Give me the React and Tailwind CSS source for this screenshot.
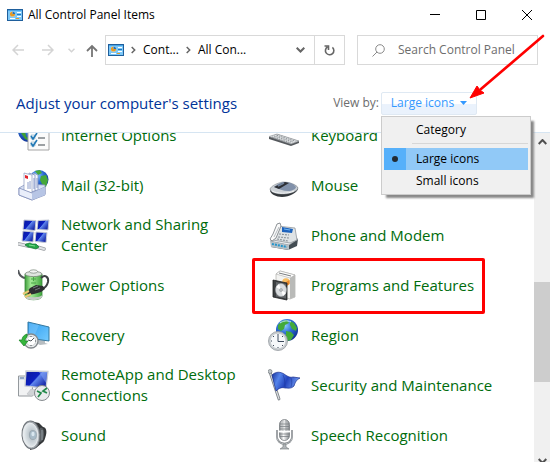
import React, { useState } from 'react';

const PanelIcon = () => (
  <svg width="16" height="12" viewBox="0 0 16 12" aria-hidden="true">
    <rect x="0.5" y="0.5" width="15" height="11" fill="#7cc8f8" stroke="#1f5f9c" />
    <rect x="1" y="1" width="14" height="1" fill="#4aa5e6" />
    <circle cx="5.5" cy="5" r="2.6" fill="#fff" />
    <path d="M5.5 5V2.4A2.6 2.6 0 1 0 8.1 5z" fill="#e59a25" />
    <path d="M5.5 5V2.4A2.6 2.6 0 0 1 8.1 5z" fill="#2273b8" />
    <rect x="10" y="3" width="4" height="1" fill="#fff" />
    <rect x="10" y="5" width="4" height="1" fill="#1f78c0" />
    <rect x="10" y="7" width="4" height="1" fill="#fff" />
    <rect x="3" y="9" width="5" height="1" fill="#fff" />
    <rect x="9" y="9" width="3" height="1" fill="#e59a25" />
  </svg>
);

const Icon = ({ children }) => (
  <svg width="32" height="32" viewBox="0 0 32 32" className="shrink-0" aria-hidden="true">
    {children}
  </svg>
);

const Gradients = () => (
  <svg width="0" height="0" className="absolute" aria-hidden="true">
    <defs>
      <radialGradient id="globe" cx="0.4" cy="0.3" r="0.75">
        <stop offset="0" stopColor="#8fd0ff" />
        <stop offset="0.45" stopColor="#2e6fd6" />
        <stop offset="1" stopColor="#0b2a8c" />
      </radialGradient>
      <linearGradient id="screen" x1="0" y1="0" x2="1" y2="0.7">
        <stop offset="0" stopColor="#0a1a9a" />
        <stop offset="0.5" stopColor="#0c1fc0" />
        <stop offset="0.55" stopColor="#5f86ee" />
        <stop offset="1" stopColor="#0e1c9e" />
      </linearGradient>
      <linearGradient id="battery" x1="0" y1="0" x2="1" y2="0">
        <stop offset="0" stopColor="#3f9e3c" />
        <stop offset="0.35" stopColor="#a5eb98" />
        <stop offset="1" stopColor="#3fa53c" />
      </linearGradient>
      <linearGradient id="metal" x1="0" y1="0" x2="1" y2="0">
        <stop offset="0" stopColor="#8b8f93" />
        <stop offset="0.4" stopColor="#fafafa" />
        <stop offset="1" stopColor="#85898d" />
      </linearGradient>
      <linearGradient id="sky" x1="0" y1="0" x2="1" y2="1">
        <stop offset="0" stopColor="#2e9cf0" />
        <stop offset="1" stopColor="#74cbff" />
      </linearGradient>
      <linearGradient id="flag" x1="0" y1="0" x2="1" y2="0.3">
        <stop offset="0" stopColor="#16309a" />
        <stop offset="0.3" stopColor="#5584ea" />
        <stop offset="0.6" stopColor="#2344bd" />
        <stop offset="1" stopColor="#6d96ee" />
      </linearGradient>
      <radialGradient id="cone" cx="0.6" cy="0.5" r="0.6">
        <stop offset="0" stopColor="#7f8a92" />
        <stop offset="0.4" stopColor="#c3ccd2" />
        <stop offset="1" stopColor="#eef2f4" />
      </radialGradient>
    </defs>
  </svg>
);

const InternetIcon = () => (
  <Icon>
    <circle cx="11" cy="12" r="11" fill="url(#globe)" />
    <path d="M2 8l5-5 6 1-2 5-4 3 1 5 4 5-5-2-4-6zM14 5l6 3 1 5-5-2z" fill="#3f9e35" />
    <path d="M10 12h21v19H10z" fill="#fbfbfb" stroke="#a5a5a5" />
    <path d="M13 16h4v4h-4zM13 23h4v4h-4z" fill="#e4f0f8" stroke="#9bb9cd" strokeWidth="0.7" />
    <path d="M13 17l2 3 4-6M13 24l2 3 4-6" fill="none" stroke="#2178b5" strokeWidth="1.6" />
    <path d="M20 19h7M20 26h7" stroke="#7d8387" strokeWidth="1.3" />
  </Icon>
);

const MailIcon = () => (
  <Icon>
    <circle cx="21" cy="10.5" r="9.5" fill="url(#globe)" />
    <path d="M17 2l5-1 2 3-4 2zM23 7l5-1 2 5-2 7-4-3-2-4z" fill="#45a83a" />
    <path d="M1 19L8 15 27 16 27 25 14 31 1 26z" fill="#d9e2f5" stroke="#8a97bf" strokeWidth="0.8" />
    <path d="M15 4l5 2v15l-5 1z" fill="#f5f8fe" stroke="#7e8ebb" strokeWidth="0.7" />
    <path d="M11 4l6 2v16l-6 1z" fill="#f9fbff" stroke="#7384b8" strokeWidth="0.7" />
    <path d="M6 4l8 2v18l-8-2z" fill="#fff" stroke="#8b98bd" strokeWidth="0.7" />
    <path d="M7 6l3 1v3L7 9z" fill="#e3222c" />
    <path d="M10 13v7M12 12v8M16 9v11M19 9v10" stroke="#7187bd" strokeWidth="0.8" />
    <path d="M1 19l13 5 13-6v8l-13 5-13-5z" fill="#e9eefa" stroke="#7d8bb7" strokeWidth="0.8" />
    <path d="M14 24v7l13-5v-8z" fill="#b7c5e5" />
  </Icon>
);

const NetworkIcon = () => (
  <Icon>
    <path d="M6 1l12 .5-1 10-12-1z" fill="url(#screen)" stroke="#c6cbd6" />
    <path d="M20 1.5l11-.5-1 10-11-.5z" fill="url(#screen)" stroke="#c6cbd6" />
    <path d="M5 12l11 1-1 10-11-1z" fill="url(#screen)" stroke="#c6cbd6" />
    <path d="M18 13l11 .5-1 10-11-1z" fill="url(#screen)" stroke="#c6cbd6" />
    <path d="M1 25l9 2M19 28l7 2" stroke="#9b9fa3" strokeWidth="3.6" strokeLinecap="round" />
    <path d="M1 25l9 2M19 28l7 2" stroke="#dfe2e4" strokeWidth="2" strokeLinecap="round" />
    <path d="M8 25l4-1 2 1h4l3 3-3 2-4-1-4-1-3-2z" fill="#25a548" stroke="#107330" strokeWidth="0.7" />
    <path d="M11 26l6 1" stroke="#7de091" />
  </Icon>
);

const PowerIcon = () => (
  <Icon>
    <path d="M0 1C1 6 3 9 8 9" fill="none" stroke="#54585c" strokeWidth="2" />
    <path d="M7 5v22c0 5 17 5 17 0V5z" fill="url(#battery)" stroke="#37883a" strokeWidth="0.8" />
    <path d="M7 26c1 3 16 3 17 0v2c-1 4-16 4-17 0z" fill="#c6cac7" />
    <ellipse cx="15.5" cy="5" rx="8.5" ry="2.6" fill="#dfe5df" stroke="#79857a" strokeWidth="0.8" />
    <ellipse cx="15.5" cy="2.5" rx="4" ry="1.7" fill="#f2f4f2" stroke="#79857a" strokeWidth="0.7" />
    <path d="M13 10h5M13 14h5M15.5 8v4" stroke="#48a545" strokeWidth="1" />
    <path d="M23 9c4-4 8-1 7 4-1 4-3 6-6 7" fill="none" stroke="#3e4144" strokeWidth="2" />
    <path d="M12 19l6-3 7 1 2 3-4 3-7 2-6 1-1-3z" fill="#2d2f31" />
    <path d="M15 19l5-2M17 21l5-2" stroke="#73777b" />
    <path d="M11 22l-6 3M13 25l-6 3" stroke="#e1b757" strokeWidth="2" />
    <path d="M11 22l-6 3M13 25l-6 3" stroke="#f6e5ac" strokeWidth="0.6" />
  </Icon>
);

const RecoveryIcon = () => (
  <Icon>
    <path d="M20 19l7 2v3l3 1-8 1-6-3z" fill="#b7bdc1" />
    <path d="M10 3l21 5v14l-21-3z" fill="url(#sky)" stroke="#35789f" />
    <path d="M11 4l10 2-6 14-4-1z" fill="#9bd8ff" opacity="0.35" />
    <circle cx="13" cy="22" r="7" fill="#eceeef" stroke="#83898d" strokeWidth="1.3" />
    <circle cx="13" cy="22" r="4.8" fill="#fff" stroke="#b5babd" strokeWidth="0.7" />
    <path d="M13 22l3-3M13 22l-3-1M13 17v1M13 26v1M18 22h-1" stroke="#4f565b" strokeWidth="1" />
    <path d="M9 15c-3 1-5 3-5 6H1l5 6 4-5H7c0-2 1-3 2-4z" fill="#37b63d" stroke="#168221" strokeWidth="0.7" />
  </Icon>
);

const RemoteIcon = () => (
  <Icon>
    <path d="M.5 7h14v20H.5z" fill="#f1f2f3" stroke="#94999d" />
    <path d="M1 8h13v3H1z" fill="#d5dfec" />
    <path d="M2 9h4" stroke="#4e6e9b" />
    <path d="M13 20l8 1v4l-8 2-4-2z" fill="#d0d3d6" stroke="#b4b7ba" strokeWidth="0.5" />
    <path d="M8 2l22 .5-2 17L7 17z" fill="url(#screen)" stroke="#c9ced6" strokeWidth="1.3" />
    <path d="M21 3h8l-1 11z" fill="#7b9df1" opacity="0.6" />
    <circle cx="24" cy="24" r="7.5" fill="#e9ebec" stroke="#858a8e" />
    <path d="M19 22l4 2-3 4M29 19l-4 3 4 2" fill="none" stroke="#23894a" strokeWidth="1.7" />
  </Icon>
);

const SoundIcon = () => (
  <Icon>
    <path d="M12 2l9 2 4 4c3 0 4 4 3 8s-2 7-4 8l-6 5-6 2z" fill="#343739" />
    <path d="M22 9c3-1 4 2 4 6s-1 7-4 8z" fill="#595e62" />
    <path d="M24 11v10" stroke="#97a0a6" />
    <ellipse cx="13" cy="16" rx="9" ry="14" fill="#a5abb0" stroke="#6c7277" transform="rotate(-4 13 16)" />
    <ellipse cx="12.5" cy="16" rx="7.5" ry="12" fill="url(#cone)" stroke="#eef1f3" strokeWidth="0.8" transform="rotate(-4 13 16)" />
    <ellipse cx="15" cy="16" rx="3.5" ry="4.5" fill="#a9bcc9" stroke="#8a969e" strokeWidth="0.5" />
    <ellipse cx="15" cy="15" rx="1.6" ry="2.3" fill="#d9e7ef" />
  </Icon>
);

const KeyboardIcon = () => (
  <Icon>
    <path d="M1 18l8-3 22 7v2l-8 3-22-7z" fill="#55595d" />
    <path d="M1 17.5l8-2.5 22 7-8 3z" fill="#dfe2e4" stroke="#929699" strokeWidth="0.6" />
    <path d="M4 18l19 6M6 17l19 6M8.5 16.2l19 6" stroke="#7f8488" strokeWidth="0.8" strokeDasharray="1.6 0.8" />
  </Icon>
);

const MouseIcon = () => (
  <Icon>
    <path d="M2 21c0-2 6-6 12-7 7-1 15 2 16 5 1 4-9 9-16 9C8 28 2 25 2 21z" fill="#34383c" />
    <path d="M2 20c1-3 7-6 13-7 7 0 14 3 15 6 0 3-8 6-15 6S2 23 2 20z" fill="#cdd2d7" stroke="#888e94" strokeWidth="0.6" />
    <path d="M6 18c3-3 7-5 11-5 6 0 10 3 11 5 0 2-4 4-8 4-5 0-9-2-14-4z" fill="#8191aa" />
    <path d="M6 18l11-5 4 1-10 6z" fill="#2d3035" />
    <path d="M10 17l6-3" stroke="#74869e" strokeWidth="1.5" />
    <path d="M4 22c5 3 16 3 22 0" fill="none" stroke="#f5f6f7" />
  </Icon>
);

const PhoneIcon = () => (
  <Icon>
    <path d="M3 22l5-4 22 2-1 7-9 4-17-3z" fill="#434c53" />
    <path d="M2 22l6-4 22 2-9 6z" fill="#eceff1" stroke="#9ba0a4" strokeWidth="0.6" />
    <path d="M2 22l19 4v5l-18-3z" fill="#b6c0c6" />
    <path d="M4 25l15 3" stroke="#2395cc" strokeWidth="2" strokeDasharray="2 1" />
    <path d="M9 7l18 2 2 12-7 3-17-3z" fill="#dfe3e5" stroke="#858b90" strokeWidth="0.7" />
    <path d="M14 8l11 2-1 4-10-1z" fill="#1d63bd" />
    <path d="M16 10l6 1" stroke="#74b9f3" />
    <path d="M11 15l10 1M10 18l11 1M9 20l11 2" stroke="#8f979d" strokeWidth="1.2" strokeDasharray="2 1" />
    <path d="M9 5l3-1 1 3-5 12-4 3-2-2 3-5z" fill="#fafafa" stroke="#747a7f" strokeWidth="0.8" />
    <path d="M11 8L6 18" stroke="#b4bbc0" />
  </Icon>
);

const ProgramsIcon = () => (
  <Icon>
    <path d="M8 5l4-3 15 4v22l-5 2-14-4z" fill="#f3f3f1" stroke="#b7b7b4" strokeWidth="0.8" />
    <path d="M22 9l5-3v22l-5 2z" fill="#b9bab8" />
    <path d="M8 5l4-3 15 4-5 3z" fill="#fff" stroke="#a9aaa8" strokeWidth="0.6" />
    <path d="M11 4l12 3" stroke="#777b7d" />
    <circle cx="18" cy="13" r="3.8" fill="#f8bd62" />
    <path d="M18 13l3.5-2v4l-2.500 1.500z" fill="#e9882b" />
    <path d="M5 11l14 3v17L5 28z" fill="#3d4042" stroke="#1f2122" strokeWidth="0.8" />
    <path d="M8 13l10 2v14.5L8 27.500z" fill="#63676a" />
    <ellipse cx="13" cy="21" rx="5.5" ry="6.5" fill="#dadddf" stroke="#a3a7aa" strokeWidth="0.5" />
    <path d="M13 21l-5-3 3-3zM13 21l5 3-3 3z" fill="#fff" />
    <circle cx="13" cy="21" r="1.7" fill="#8c9194" />
    <circle cx="13" cy="21" r="0.7" fill="#fff" />
  </Icon>
);

const RegionIcon = () => (
  <Icon>
    <circle cx="19" cy="11" r="11" fill="url(#globe)" />
    <path d="M10 6l4-4 5-1 2 3-4 2-1 4-3 2-3-2zM22 2l4 2 3 5-1 3-4-2-2-4zM18 12l5 1 3 3-3 5-4 1-1-5z" fill="#43aa3a" />
    <path d="M12 4c3-2 7-3 11-1" stroke="#bfebff" strokeWidth="1" fill="none" />
    <circle cx="10" cy="22" r="9.5" fill="#c8cdd1" stroke="#969b9f" strokeWidth="0.8" />
    <circle cx="10" cy="22" r="7.8" fill="#f6f8fa" stroke="#b8bdc1" strokeWidth="0.6" />
    <path d="M10 15v7.5h6M10 28v1M3 22h1M5 17l1 1M15 17l-1 1M5 27l1-1M15 27l-1-1" fill="none" stroke="#3d4b5c" strokeWidth="1" />
  </Icon>
);

const SecurityIcon = () => (
  <Icon>
    <path d="M2 3l9 27" stroke="#777d82" strokeWidth="2.8" strokeLinecap="round" />
    <path d="M2 3l9 27" stroke="#dadde0" strokeWidth="1.2" strokeLinecap="round" />
    <circle cx="2" cy="2.5" r="2" fill="#c1c6ca" stroke="#767c80" strokeWidth="0.7" />
    <path d="M4 6c4-4 9-3 12-1s6 4 9 3l7 1c-4 2-5 5-6 8-3 3-6 2-9 2-3-1-6 0-9 3z" fill="url(#flag)" stroke="#172d8b" strokeWidth="0.7" />
    <path d="M15 6c2 4 2 8 2 12M23 9c1 3 1 6 0 9" stroke="#17318f" strokeWidth="0.8" fill="none" opacity="0.6" />
  </Icon>
);

const SpeechIcon = () => (
  <Icon>
    <path d="M9 11v7c0 9 15 9 15 0v-7" fill="none" stroke="#777c80" strokeWidth="1.8" />
    <path d="M9 11v7c0 9 15 9 15 0v-7" fill="none" stroke="#d5d8da" strokeWidth="0.7" />
    <path d="M15 25h3v3l3 2h-9l3-2z" fill="#b1b5b8" stroke="#73787b" strokeWidth="0.6" />
    <rect x="11.5" y="0.5" width="10" height="21" rx="5" fill="url(#metal)" stroke="#777c80" strokeWidth="0.8" />
    <path d="M12 5h9M12 7.5h9M12 10h9M12 15h9M12 17.5h9" stroke="#73787c" strokeWidth="0.7" />
    <path d="M11 12.5h11" stroke="#fff" strokeWidth="1.8" />
    <path d="M15 1v11M18 1v11" stroke="#8b9094" strokeWidth="0.6" />
  </Icon>
);

const items = [
  { name: 'Internet Options', icon: InternetIcon },
  { name: 'Keyboard', icon: KeyboardIcon },
  { name: 'Mail (32-bit)', icon: MailIcon },
  { name: 'Mouse', icon: MouseIcon },
  { name: 'Network and Sharing Center', icon: NetworkIcon },
  { name: 'Phone and Modem', icon: PhoneIcon },
  { name: 'Power Options', icon: PowerIcon },
  { name: 'Programs and Features', icon: ProgramsIcon, marked: true },
  { name: 'Recovery', icon: RecoveryIcon },
  { name: 'Region', icon: RegionIcon },
  { name: 'RemoteApp and Desktop Connections', icon: RemoteIcon },
  { name: 'Security and Maintenance', icon: SecurityIcon },
  { name: 'Sound', icon: SoundIcon },
  { name: 'Speech Recognition', icon: SpeechIcon },
];

const views = ['Category', 'Large icons', 'Small icons'];

const Crumb = () => (
  <svg width="5" height="8" viewBox="0 0 5 8" fill="none" stroke="#666" strokeWidth="1.5" aria-hidden="true">
    <path d="M.7 1l3 3-3 3" />
  </svg>
);

const TitleBar = () => (
  <header className="flex h-[30px] items-center">
    <div className="flex flex-1 items-center gap-[5px] pl-[7px] text-xs text-black">
      <PanelIcon />
      <h1>All Control Panel Items</h1>
    </div>
    <button aria-label="Minimize" className="flex h-full w-[46px] items-center justify-center">
      <svg width="10" height="10" viewBox="0 0 10 10" stroke="#000"><path d="M0 4.5h10" /></svg>
    </button>
    <button aria-label="Maximize" className="flex h-full w-[46px] items-center justify-center">
      <svg width="10" height="10" viewBox="0 0 10 10" fill="none" stroke="#000"><path d="M.5.5h9v9h-9z" /></svg>
    </button>
    <button aria-label="Close" className="flex h-full w-[46px] items-center justify-center">
      <svg width="10" height="10" viewBox="0 0 10 10" stroke="#000"><path d="M0 0l10 10M10 0L0 10" /></svg>
    </button>
  </header>
);

const AddressBar = () => (
  <nav className="mt-[5px] flex h-[30px] items-center pr-3">
    <div className="flex w-[105px] shrink-0 items-center pl-3">
      <button aria-label="Back" className="mr-[18px]">
        <svg width="12" height="12" viewBox="0 0 12 12" fill="none" stroke="#d4d4d4" strokeWidth="1.5"><path d="M12 6H1M6 1L1 6l5 5" /></svg>
      </button>
      <button aria-label="Forward" className="mr-[14px]">
        <svg width="12" height="12" viewBox="0 0 12 12" fill="none" stroke="#d4d4d4" strokeWidth="1.5"><path d="M0 6h11M6 1l5 5-5 5" /></svg>
      </button>
      <button aria-label="Recent locations" className="mr-[11px]">
        <svg width="7" height="5" viewBox="0 0 7 5" fill="none" stroke="#d4d4d4" strokeWidth="1.5"><path d="M.5.7l3 3 3-3" /></svg>
      </button>
      <button aria-label="Up">
        <svg width="12" height="13" viewBox="0 0 12 13" fill="none" stroke="#757575" strokeWidth="1.8"><path d="M6 13V2M1 7l5-5 5 5" /></svg>
      </button>
    </div>
    <div className="flex h-full flex-1 border border-[#d9d9d9] text-xs text-black">
      <div className="flex flex-1 items-center pl-[2px]">
        <PanelIcon />
        <span className="ml-[7px]"><Crumb /></span>
        <a href="#control" className="ml-[7px]">Cont...</a>
        <span className="ml-[7px]"><Crumb /></span>
        <a href="#items" className="ml-[7px]">All Con...</a>
        <button aria-label="Previous locations" className="mr-[9px] ml-auto">
          <svg width="9" height="6" viewBox="0 0 9 6" fill="none" stroke="#666" strokeWidth="2"><path d="M.7.7l3.8 3.8L8.3.7" /></svg>
        </button>
      </div>
      <button aria-label="Refresh" className="flex w-[30px] items-center justify-center border-l border-[#d9d9d9]">
        <svg width="11" height="12" viewBox="0 0 11 12" fill="none" stroke="#666" strokeWidth="1.6"><path d="M8.4 3.4A4.2 4.2 0 1 1 3.4 3M.5 2h4v4" /></svg>
      </button>
    </div>
    <label className="ml-3 flex h-full w-[181px] shrink-0 items-center gap-[13px] border border-[#d9d9d9] pl-[14px]">
      <svg width="13" height="13" viewBox="0 0 13 13" fill="none" stroke="#8a8a8a" className="shrink-0"><circle cx="8" cy="5" r="4.3" /><path d="M5 8L.5 12.5" /></svg>
      <input aria-label="Search Control Panel" placeholder="Search Control Panel" className="w-full min-w-0 text-xs outline-none placeholder:text-[#6d6d6d]" />
    </label>
  </nav>
);

const ViewMenu = () => {
  const [open, setOpen] = useState(true);
  const [view, setView] = useState('Large icons');

  return (
    <div className="flex items-center gap-[2px]">
      <span className="text-xs text-[#6d6d6d]">View by:</span>
      <div className="relative">
        <button
          onClick={() => setOpen(!open)}
          aria-expanded={open}
          className="flex h-[23px] w-[96px] items-center justify-center gap-[6px] rounded-[2px] border border-[#dfe9f3] bg-linear-to-b from-white from-50% to-[#eaf2fc] to-55% text-xs text-[#3399ff]"
        >
          {view}
          <svg width="7" height="4" viewBox="0 0 7 4" fill="#3399ff" aria-hidden="true"><path d="M0 0h7L3.5 4z" /></svg>
        </button>
        {open && (
          <ul className="absolute top-[24px] left-0 z-10 w-[150px] border border-[#ccc] bg-[#f0f0f0] p-[2px] shadow-[4px_4px_2px_-1px_#888]">
            {views.map((name) => (
              <li key={name} className={name === 'Category' ? 'mb-[3px] pb-[1px]' : ''}>
                <button
                  onClick={() => setView(name)}
                  className={`flex h-[22px] w-full items-center text-left text-xs text-black ${name === view ? 'bg-[#91c9f7]' : ''}`}
                >
                  <span className={`mr-[10px] flex h-full w-[22px] items-center justify-center ${name === view ? 'bg-[#56b0fa]' : ''}`}>
                    {name === view && <span className="size-[6px] rounded-full bg-[#222b33]"></span>}
                  </span>
                  {name}
                </button>
                {name === 'Category' && <hr className="mt-[2px] ml-[28px] border-[#d7d7d7]" />}
              </li>
            ))}
          </ul>
        )}
      </div>
    </div>
  );
};

const ScrollBar = () => (
  <div className="flex w-[16px] shrink-0 flex-col items-center bg-[#f0f0f0]" aria-hidden="true">
    <svg width="9" height="6" viewBox="0 0 9 6" fill="none" stroke="#505050" strokeWidth="2" className="mt-[6px] shrink-0"><path d="M.7 5l3.8-4 3.8 4" /></svg>
    <div className="mt-[137px] h-[100px] w-full shrink-0 bg-[#cdcdcd]"></div>
    <svg width="9" height="6" viewBox="0 0 9 6" fill="none" stroke="#505050" strokeWidth="2" className="mt-[76px] shrink-0"><path d="M.7 1l3.8 4 3.8-4" /></svg>
  </div>
);

const App = () => {
  return (
    <div className="relative flex h-screen flex-col overflow-hidden bg-white font-['Open_Sans',sans-serif]">
      <Gradients />
      <TitleBar />
      <AddressBar />

      <div className="flex h-[68px] items-center justify-between border-b border-[#d6e5f2] pt-[9px] pr-[73px] pl-4">
        <h2 className="text-[15px] text-[#003399]">Adjust your computer's settings</h2>
        <ViewMenu />
      </div>

      <main className="flex min-h-0 flex-1">
        <div className="flex-1 overflow-hidden">
          <ul className="-mt-[23px] grid grid-cols-[repeat(auto-fill,250px)] pl-[18px]">
            {items.map(({ name, icon: ItemIcon, marked }) => (
              <li key={name} className="relative h-[50px]">
                <a href="#item" className="flex h-full items-center gap-[11px] text-[15px] leading-[21px] text-[#006c0c]">
                  <ItemIcon />
                  <span className="max-w-[185px]">{name}</span>
                </a>
                {marked && <span className="pointer-events-none absolute -top-[2px] -bottom-[4px] -left-4 w-[233px] rounded-[2px] border-3 border-[#ff0000]"></span>}
              </li>
            ))}
          </ul>
        </div>
        <ScrollBar />
      </main>

      <svg width="80" height="68" viewBox="0 0 80 68" className="pointer-events-none absolute top-[32px] right-[3px] z-20" aria-hidden="true">
        <path d="M76 4L14 57" stroke="#ff0000" strokeWidth="2.6" strokeLinecap="round" />
        <path d="M3 66l7-12 3 4 4 3z" fill="#ff0000" stroke="#ff0000" strokeLinejoin="round" />
      </svg>
    </div>
  );
};

export default App;
